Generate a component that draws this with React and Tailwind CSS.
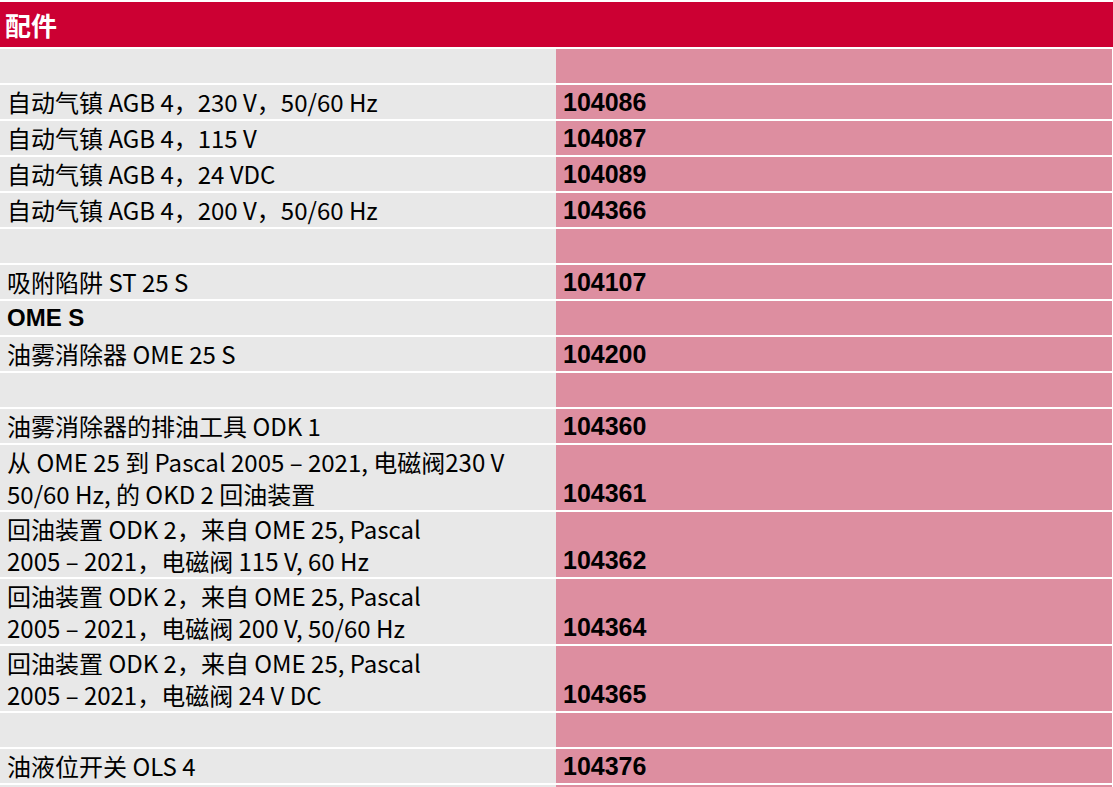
const rows = [
  { text: [""], no: "" },
  { text: ["自动气镇 AGB 4，230 V，50/60 Hz"], no: "104086" },
  { text: ["自动气镇 AGB 4，115 V"], no: "104087" },
  { text: ["自动气镇 AGB 4，24 VDC"], no: "104089" },
  { text: ["自动气镇 AGB 4，200 V，50/60 Hz"], no: "104366" },
  { text: [""], no: "" },
  { text: ["吸附陷阱 ST 25 S"], no: "104107" },
  { text: ["OME S"], no: "", bold: true },
  { text: ["油雾消除器 OME 25 S"], no: "104200" },
  { text: [""], no: "" },
  { text: ["油雾消除器的排油工具 ODK 1"], no: "104360" },
  { text: ["从 OME 25 到 Pascal 2005 – 2021, 电磁阀230 V", "50/60 Hz, 的 OKD 2 回油装置"], no: "104361" },
  { text: ["回油装置 ODK 2，来自 OME 25, Pascal", "2005 – 2021，电磁阀 115 V, 60 Hz"], no: "104362" },
  { text: ["回油装置 ODK 2，来自 OME 25, Pascal", "2005 – 2021，电磁阀 200 V, 50/60 Hz"], no: "104364" },
  { text: ["回油装置 ODK 2，来自 OME 25, Pascal", "2005 – 2021，电磁阀 24 V DC"], no: "104365" },
  { text: [""], no: "" },
  { text: ["油液位开关 OLS 4"], no: "104376" },
  { text: [""], no: "" },
];

const cjk = { fontFamily: '"Noto Sans CJK SC", "Noto Sans", sans-serif' };
const arial = { fontFamily: '"Liberation Sans", "Noto Sans CJK SC", sans-serif' };

function Row({ row }) {
  const tall = row.text.length > 1;
  return (
    <div className={`grid grid-cols-[556px_556px] ${tall ? "h-[65px]" : "h-[34px]"}`}>
      <div className="flex flex-col justify-center bg-[#e8e8e8] pl-[7px] text-black">
        {row.text.map((line, i) =>
          row.bold ? (
            <span key={i} style={arial} className="text-[24px] font-bold leading-[32px]">
              {line}
            </span>
          ) : (
            <span key={i} style={cjk} className="text-[24px] leading-[32px] whitespace-nowrap">
              {line}
            </span>
          )
        )}
      </div>
      <div className={`flex bg-[#dd8ea0] pl-[7px] ${tall ? "items-end pb-[1px]" : "items-center"}`}>
        <span style={arial} className="text-[25px] font-bold leading-[32px] text-black">
          {row.no}
        </span>
      </div>
    </div>
  );
}

export default function App() {
  return (
    <div className="h-[787px] w-[1113px] overflow-hidden bg-white pt-[2px]">
      <div className="flex flex-col gap-[2px]">
        <div className="flex h-[45px] items-center bg-[#cc0033] pl-[5px]">
          <span style={cjk} className="text-[26px] font-bold text-white">配件</span>
        </div>
        {rows.map((row, i) => (
          <Row key={i} row={row} />
        ))}
      </div>
    </div>
  );
}
